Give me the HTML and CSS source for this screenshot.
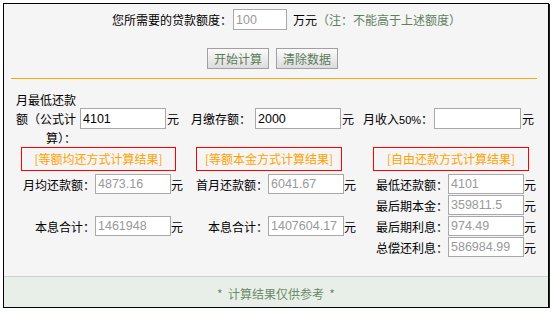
FILE: index.html
```html
<!DOCTYPE html>
<html lang="zh-CN">
<head>
<meta charset="UTF-8">
<title>贷款计算</title>
<link rel="stylesheet" href="styles.css">
</head>
<body>
<div class="calc">
  <div class="amount">
    <span class="amount-label">您所需要的贷款额度：</span>
    <input class="field field-amount" value="100">
    <span class="amount-unit">万元</span><span class="note">（注：不能高于上述额度）</span>
  </div>
  <div class="actions">
    <button class="btn">开始计算</button>
    <button class="btn">清除数据</button>
  </div>
  <div class="rule"></div>

  <div class="inputs">
    <div class="cell cell-1">
      <span class="label label-wrap">月最低还款额（公式计算）：</span>
      <input class="field field-main" value="4101">
      <span class="unit">元</span>
    </div>
    <div class="cell cell-2">
      <span class="label">月缴存额：</span>
      <input class="field field-main" value="2000">
      <span class="unit">元</span>
    </div>
    <div class="cell cell-3">
      <span class="label">月收入<small>50%</small>：</span>
      <input class="field field-wide" value="">
      <span class="unit">元</span>
    </div>
  </div>

  <div class="titles">
    <div class="title title-1">[等额均还方式计算结果]</div>
    <div class="title title-2">[等额本金方式计算结果]</div>
    <div class="title title-3">[自由还款方式计算结果]</div>
  </div>

  <div class="results">
    <div class="col col-1">
      <span class="label">月均还款额：</span><input class="field field-out" value="4873.16" readonly><span class="unit">元</span>
      <span class="label">本息合计：</span><input class="field field-out" value="1461948" readonly><span class="unit">元</span>
    </div>
    <div class="col col-2">
      <span class="label">首月还款额：</span><input class="field field-out" value="6041.67" readonly><span class="unit">元</span>
      <span class="label">本息合计：</span><input class="field field-out" value="1407604.17" readonly><span class="unit">元</span>
    </div>
    <div class="col col-3">
      <span class="label">最低还款额：</span><input class="field field-out" value="4101" readonly><span class="unit">元</span>
      <span class="label">最后期本金：</span><input class="field field-out" value="359811.5" readonly><span class="unit">元</span>
      <span class="label">最后期利息：</span><input class="field field-out" value="974.49" readonly><span class="unit">元</span>
      <span class="label">总偿还利息：</span><input class="field field-out" value="586984.99" readonly><span class="unit">元</span>
    </div>
  </div>

  <div class="footer">*&nbsp;&nbsp;计算结果仅供参考&nbsp;&nbsp;*</div>
</div>
</body>
</html>
```

FILE: styles.css
```css
body {
  margin: 0;
  background: #fff;
  font-family: "Noto Sans CJK SC", "Liberation Sans", sans-serif;
  font-size: 12px;
  color: #000;
}
.calc {
  box-sizing: border-box;
  margin: 3px 0 0 3px;
  width: 546px;
  height: 305px;
  border: 1px solid #000;
  box-shadow: 1px 1px 0 #222;
  background: #f5f5f5;
  display: flex;
  flex-direction: column;
}
.field {
  box-sizing: border-box;
  height: 20px;
  margin: 0;
  padding: 0 1px 0 2px;
  border: 1px solid #a9a9a9;
  background: #fff;
  font-family: "Liberation Sans", sans-serif;
  font-size: 12.5px;
  color: #000;
  outline: none;
}

/* top row */
.amount {
  display: flex;
  align-items: center;
  height: 21px;
  margin-top: 5px;
  padding-left: 108px;
  line-height: 21px;
}
.amount-label {
  width: 121px;
}
.field-amount {
  width: 54px;
  height: 21px;
  color: #999;
}
.amount-unit {
  margin-left: 6px;
}
.note {
  color: #5f7f5f;
}

/* buttons */
.actions {
  display: flex;
  gap: 7px;
  margin-top: 18px;
  padding-left: 203px;
}
.btn {
  box-sizing: border-box;
  width: 62px;
  height: 21px;
  padding: 0;
  border: 1px solid #a0a0a0;
  background: linear-gradient(#fbfbfb, #dcdcdc);
  font-family: "Noto Sans CJK SC", sans-serif;
  font-size: 12px;
  color: #5a7a5a;
  line-height: 19px;
}
.rule {
  height: 1px;
  margin: 9px 0 0 7px;
  width: 526px;
  background: #ffa800;
}

/* input row */
.inputs {
  display: flex;
  align-items: center;
  margin-top: 11px;
  padding-left: 12px;
  height: 57px;
}
.cell {
  display: flex;
  align-items: center;
}
.cell-1 { width: 175px; }
.cell-2 { width: 172px; }
.label {
  white-space: nowrap;
}
.label-wrap {
  width: 60px;
  white-space: normal;
  text-align: right;
  line-height: 19px;
}
.cell-2 .label { width: 60px; }
.cell-3 .label { width: 71px; }
.label small {
  font-family: "Liberation Sans", sans-serif;
  font-size: 11px;
}
.field-main {
  width: 86px;
  height: 21px;
  margin-left: 4px;
}
.cell-3 .field-wide {
  width: 87px;
  height: 21px;
}
.unit {
  margin-left: 1px;
  width: 12px;
}

/* section titles */
.titles {
  display: flex;
  height: 24px;
  padding-left: 17px;
}
.title {
  box-sizing: border-box;
  height: 24px;
  border: 1px solid #f00;
  color: #ffa200;
  text-align: center;
  line-height: 21px;
}
.title-1 { width: 155px; }
.title-2 { width: 146px; margin-left: 20px; }
.title-3 { width: 156px; margin-left: 31px; }

/* results */
.results {
  display: flex;
  align-items: flex-start;
  margin-top: 3px;
}
.col {
  display: grid;
  grid-auto-rows: 20px;
  align-items: center;
}
.col-1 { grid-template-columns: 91px 76px 12px; row-gap: 22px; }
.col-2 { grid-template-columns: 85px 76px 12px; row-gap: 22px; }
.col-3 { grid-template-columns: 92px 76px 12px; row-gap: 1px; }
.col .label {
  text-align: right;
}
.col .unit {
  margin-left: 0;
}
.field-out {
  width: 76px;
  color: #999;
}

/* footer */
.footer {
  box-sizing: border-box;
  margin-top: auto;
  height: 31px;
  border-top: 1px solid #cfcfcf;
  background: #e8efe8;
  color: #6b8b6b;
  text-align: center;
  padding-top: 8px;
  line-height: 18px;
}
```
